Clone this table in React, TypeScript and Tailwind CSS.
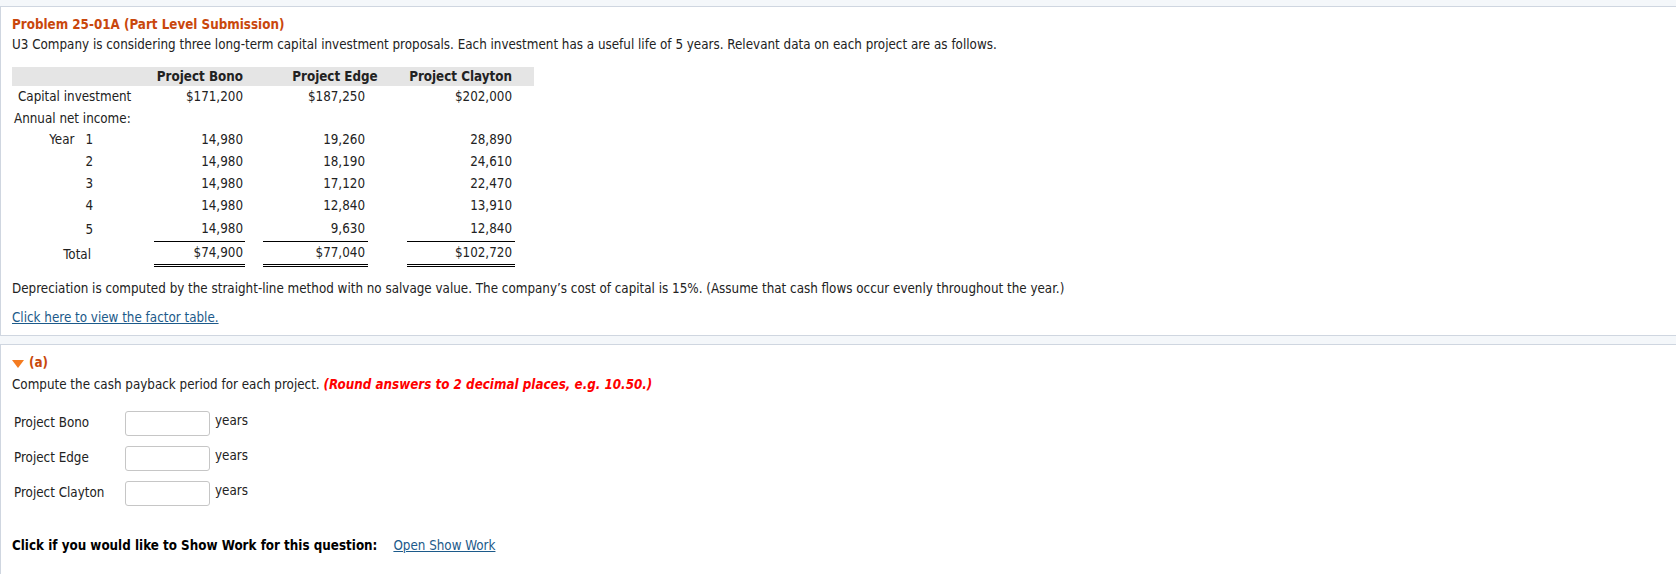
const rows = [
  { label: "1", year: true, bono: "14,980", edge: "19,260", clayton: "28,890" },
  { label: "2", bono: "14,980", edge: "18,190", clayton: "24,610" },
  { label: "3", bono: "14,980", edge: "17,120", clayton: "22,470" },
  { label: "4", bono: "14,980", edge: "12,840", clayton: "13,910" },
  { label: "5", bono: "14,980", edge: "9,630", clayton: "12,840", last: true },
];

const projects = ["Project Bono", "Project Edge", "Project Clayton"];

export default function App() {
  return (
    <div className="min-h-[575px] bg-white text-[13.3px] text-[#222] font-['DejaVu_Sans_Condensed','DejaVu_Sans',sans-serif]">
      {/* top strip */}
      <div className="h-[7px] bg-[#f4f7fa] border-b border-[#cfd6e0]" />

      {/* Problem panel */}
      <div className="border-l border-b border-[#cfd6e0] px-[11px] pt-[10px] pb-[9px]">
        <h1 className="leading-4 font-bold text-[#c9470c]">
          Problem 25-01A (Part Level Submission)
        </h1>
        <p className="mt-[4px] leading-4">
          U3 Company is considering three long-term capital investment proposals. Each investment has a useful life of 5 years. Relevant data on each project are as follows.
        </p>

        <div className="mt-[14px] grid grid-cols-[142px_91px_18px_105px_39px_108px_19px] w-[522px]">
          {/* header */}
          <div className="col-span-7 grid grid-cols-subgrid h-[19px] bg-[#e5e5e5] font-bold items-center">
            <div />
            <div className="text-right pr-[2px]">Project Bono</div>
            <div />
            <div className="col-span-2 text-center">Project Edge</div>
            <div className="text-right pr-[3px]">Project Clayton</div>
            <div />
          </div>

          <div className="h-[21px] flex items-center pl-[6px]">Capital investment</div>
          <div className="h-[21px] flex items-center justify-end pr-[2px]">$171,200</div>
          <div />
          <div className="h-[21px] flex items-center justify-end pr-[3px]">$187,250</div>
          <div />
          <div className="h-[21px] flex items-center justify-end pr-[3px]">$202,000</div>
          <div />

          <div className="col-span-7 h-[22px] flex items-center pl-[2px] pt-[2px]">Annual net income:</div>

          {rows.map((r) => {
            const line = r.last ? "border-b border-black" : "";
            return (
              <div
                key={r.label}
                className={`col-span-7 grid grid-cols-subgrid ${r.last ? "h-[25px]" : "h-[22px]"}`}
              >
                <div className={`w-[81px] flex justify-end gap-[11px] ${r.last ? "items-start pt-[3px]" : "items-center"}`}>
                  {r.year && <span>Year</span>}
                  <span>{r.label}</span>
                </div>
                <div className={`flex items-center justify-end pr-[2px] ${line}`}>{r.bono}</div>
                <div />
                <div className={`flex items-center justify-end pr-[3px] ${line}`}>{r.edge}</div>
                <div />
                <div className={`flex items-center justify-end pr-[3px] ${line}`}>{r.clayton}</div>
                <div />
              </div>
            );
          })}

          <div className="col-span-7 grid grid-cols-subgrid h-[25px]">
            <div className="w-[79px] flex items-center justify-end">Total</div>
            <div className="flex items-center justify-end pr-[2px] border-b-[3px] border-double border-black">$74,900</div>
            <div />
            <div className="flex items-center justify-end pr-[3px] border-b-[3px] border-double border-black">$77,040</div>
            <div />
            <div className="flex items-center justify-end pr-[3px] border-b-[3px] border-double border-black">$102,720</div>
            <div />
          </div>
        </div>

        <p className="mt-[14px] leading-4">
          Depreciation is computed by the straight-line method with no salvage value. The company’s cost of capital is 15%. (Assume that cash flows occur evenly throughout the year.)
        </p>
        <a href="#" className="block mt-[13px] leading-4 w-fit text-[#1c5a8a] underline">
          Click here to view the factor table.
        </a>
      </div>

      <div className="h-[8px] bg-[#f4f7fa]" />

      {/* Part (a) */}
      <div className="border-l border-t border-[#cfd6e0] px-[11px] pt-[10px] pb-[20px]">
        <div className="flex items-center gap-[5px] leading-4">
          <svg width="12" height="8" viewBox="0 0 12 8" className="mt-[1px]">
            <path d="M0 0 H12 L6 8 Z" fill="#f47b20" />
          </svg>
          <span className="font-bold text-[#c9470c]">(a)</span>
        </div>
        <p className="mt-[6px] leading-4">
          Compute the cash payback period for each project.{" "}
          <span className="font-bold italic text-[#f00]">(Round answers to 2 decimal places, e.g. 10.50.)</span>
        </p>

        <div className="mt-[18px] flex flex-col gap-[10px]">
          {projects.map((p) => (
            <div key={p} className="flex items-start">
              <label className="w-[113px] pl-[2px] pt-[4px] leading-4">{p}</label>
              <input
                type="text"
                className="w-[85px] h-[25px] border border-[#c6c6c6] rounded-[3px] bg-white outline-none"
              />
              <span className="ml-[5px] pt-[2px] leading-4">years</span>
            </div>
          ))}
        </div>

        <div className="mt-[32px] flex items-center leading-4">
          <span className="font-bold text-black">Click if you would like to Show Work for this question:</span>
          <a href="#" className="ml-[16px] text-[#1c5a8a] underline">Open Show Work</a>
        </div>
      </div>
    </div>
  );
}
